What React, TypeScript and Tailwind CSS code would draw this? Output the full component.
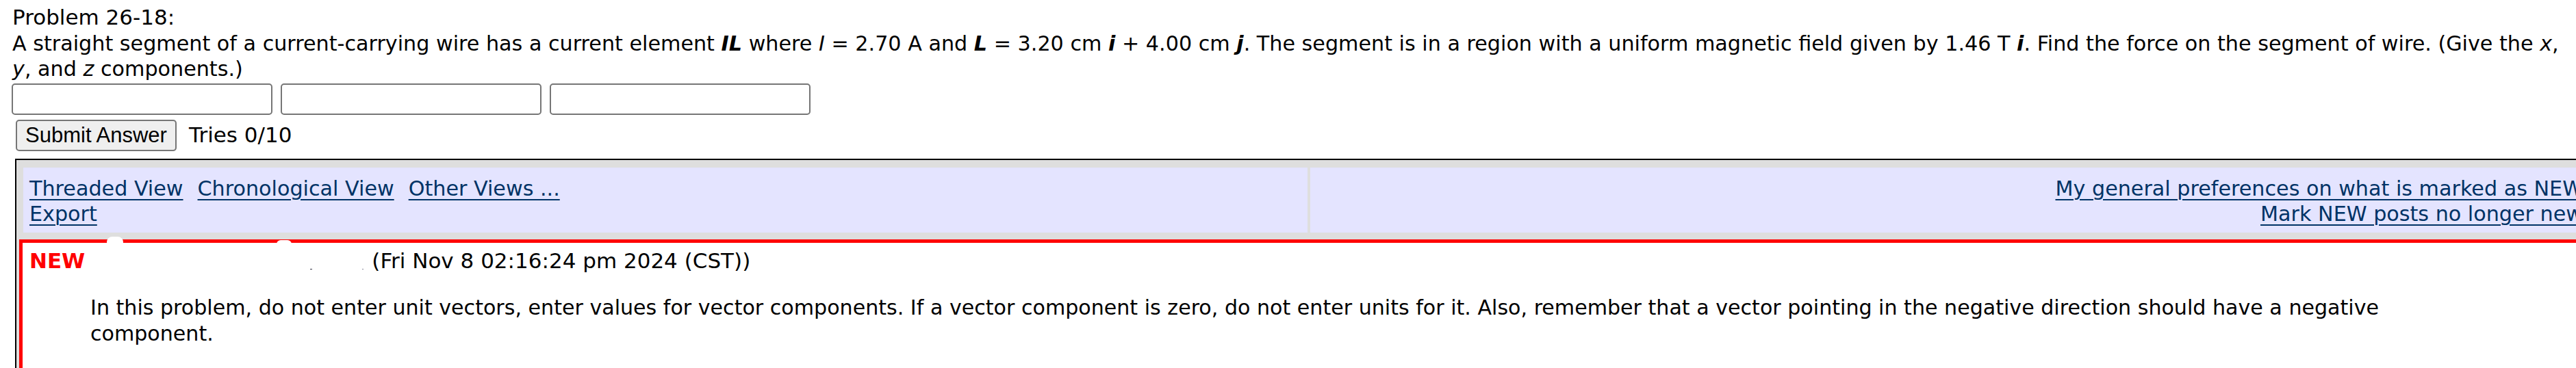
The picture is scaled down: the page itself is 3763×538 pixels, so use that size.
const body = "font-['DejaVu_Sans',Verdana,sans-serif]";
const link = "text-[#003366] underline decoration-2 underline-offset-[5px]";

function AnswerInput() {
  return (
    <input
      type="text"
      className="h-[46px] w-[381px] rounded-[5px] border-2 border-[#767676] bg-white"
    />
  );
}

export default function App() {
  return (
    <div
      className={`relative h-[538px] w-[3763px] overflow-hidden bg-white pl-[18px] pt-[7px] text-[30.2px] leading-[37.5px] text-black ${body}`}
    >
      <div className="whitespace-nowrap text-[31px]">Problem 26-18:</div>
      <div className="whitespace-nowrap">
        A straight segment of a current-carrying wire has a current element{" "}
        <b>
          <i>IL</i>
        </b>{" "}
        where <i>I</i> = 2.70 A and{" "}
        <b>
          <i>L</i>
        </b>{" "}
        = 3.20 cm{" "}
        <b>
          <i>i</i>
        </b>{" "}
        + 4.00 cm{" "}
        <b>
          <i>j</i>
        </b>
        . The segment is in a region with a uniform magnetic field given by
        1.46 T{" "}
        <b>
          <i>i</i>
        </b>
        . Find the force on the segment of wire. (Give the <i>x</i>,
        <br />
        <i>y</i>, and <i>z</i> components.)
      </div>

      <div className="-ml-px mt-[2px] flex gap-[12px]">
        <AnswerInput />
        <AnswerInput />
        <AnswerInput />
      </div>

      <div className="mt-[7px] flex items-center">
        <button
          type="button"
          className="ml-[5px] h-[46px] w-[235px] rounded-[5px] border-2 border-[#767676] bg-[#efefef] font-['Liberation_Sans',Arial,sans-serif] text-[31px] leading-none text-black"
        >
          Submit Answer
        </button>
        <span className="ml-[18px] text-[31px]">Tries 0/10</span>
      </div>

      {/* discussion thread */}
      <div className="ml-[4px] mt-[11px] w-[3780px] border-l-2 border-t-2 border-black bg-[#dedede] pl-[4px]">
        <div className="flex gap-[4px] pl-[6px] pt-[11px]">
          <div className="h-[95px] w-[1876px] bg-[#e4e4ff] pl-[9px] pt-[12px]">
            <div className="flex gap-[21px] whitespace-nowrap">
              <a className={link}>Threaded View</a>
              <a className={link}>Chronological View</a>
              <a className={link}>Other Views ...</a>
            </div>
            <a className={link}>Export</a>
          </div>
          <div className="flex h-[95px] w-[1876px] flex-col items-end bg-[#e4e4ff] pr-[17px] pt-[12px] whitespace-nowrap">
            <a className={link}>My general preferences on what is marked as NEW</a>
            <a className={link}>Mark NEW posts no longer new</a>
          </div>
        </div>

        <div className="relative mt-[10px] h-[200px] border-[5px] border-[#ff0000] bg-white pl-[10px] pt-[8px]">
          <span className="absolute left-[123px] top-[-9px] h-[16px] w-[24px] rounded-full bg-white" />
          <span className="absolute left-[371px] top-[-4px] h-[12px] w-[22px] rounded-full bg-white" />
          <span className="absolute left-[420px] top-[38px] h-px w-[3px] bg-[#334]" />
          <span className="absolute left-[496px] top-[38px] h-px w-[2px] bg-[#889]" />
          <div className="flex whitespace-nowrap">
            <b className="text-[31px] text-[#ff0000]">NEW</b>
            <span className="ml-[419px] text-[31px]">(Fri Nov 8 02:16:24 pm 2024 (CST))</span>
          </div>
          <div className="ml-[89px] mt-[31px] whitespace-nowrap text-[30.1px]">
            In this problem, do not enter unit vectors, enter values for vector
            components. If a vector component is zero, do not enter units for
            it. Also, remember that a vector pointing in the negative direction
            should have a negative
            <br />
            component.
          </div>
        </div>
      </div>
    </div>
  );
}
